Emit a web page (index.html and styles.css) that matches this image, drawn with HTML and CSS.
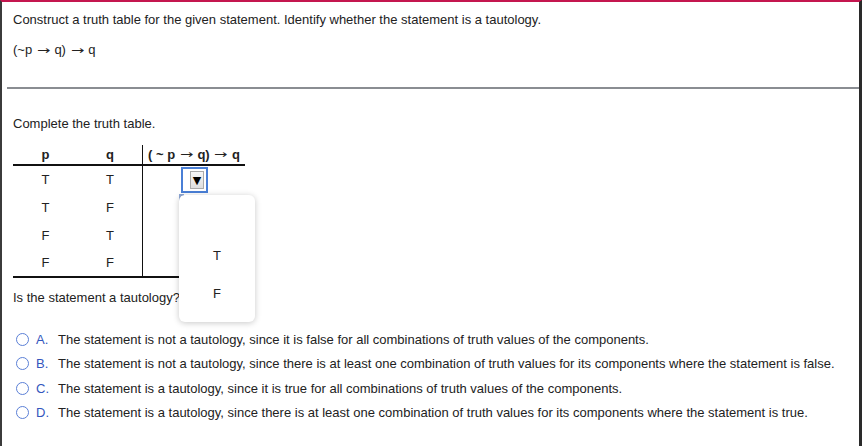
FILE: index.html
```html
<!DOCTYPE html>
<html>
<head>
<meta charset="utf-8">
<link rel="stylesheet" href="styles.css">
</head>
<body>
<div class="frame">
  <div class="question">
    <p class="line first">Construct a truth table for the given statement. Identify whether the statement is a tautology.</p>
    <p class="line stmt">(~p <span class="arr">→</span> q) <span class="arr">→</span> q</p>
  </div>
  <hr class="rule">
  <div class="answer">
    <p class="line">Complete the truth table.</p>
    <div class="table">
      <div class="cell head c1">p</div>
      <div class="cell head c2">q</div>
      <div class="cell head c3">( ~ p <span class="arr">→</span> q) <span class="arr">→</span> q</div>
      <div class="cell c1">T</div>
      <div class="cell c2">T</div>
      <div class="cell c3"><span class="select"><span class="btn">▼</span></span></div>
      <div class="cell c1">T</div>
      <div class="cell c2">F</div>
      <div class="cell c3"></div>
      <div class="cell c1">F</div>
      <div class="cell c2">T</div>
      <div class="cell c3"></div>
      <div class="cell c1 last">F</div>
      <div class="cell c2 last">F</div>
      <div class="cell c3 last"></div>
    </div>
    <p class="line ask">Is the statement a tautology?</p>
    <ul class="options">
      <li><span class="radio"></span><span class="letter">A.</span><span>The statement is not a tautology, since it is false for all combinations of truth values of the components.</span></li>
      <li><span class="radio"></span><span class="letter">B.</span><span>The statement is not a tautology, since there is at least one combination of truth values for its components where the statement is false.</span></li>
      <li><span class="radio"></span><span class="letter">C.</span><span>The statement is a tautology, since it is true for all combinations of truth values of the components.</span></li>
      <li><span class="radio"></span><span class="letter">D.</span><span>The statement is a tautology, since there is at least one combination of truth values for its components where the statement is true.</span></li>
    </ul>
  </div>
  <div class="corner"></div>
  <div class="popup">
    <div class="opt">T</div>
    <div class="opt">F</div>
  </div>
</div>
</body>
</html>
```

FILE: styles.css
```css
html, body {
  margin: 0;
  padding: 0;
  background: #fff;
}
body {
  font-family: "Liberation Sans", Arial, sans-serif;
  font-size: 13px;
  color: #222;
}
.frame {
  position: relative;
  height: 446px;
  box-sizing: border-box;
  border-left: 2px solid #3b3b3b;
  border-right: 3px solid #2a2a2a;
  border-top: 2px solid #c4164f;
  overflow: hidden;
}
.line {
  margin: 0;
  line-height: 15px;
}
.arr {
  display: inline-block;
  width: 15px;
  text-align: center;
  font-family: "DejaVu Sans", sans-serif;
  font-size: 11px;
  font-weight: normal;
  transform: scaleX(1.45);
}
.question {
  padding: 10px 0 0 11px;
}
.stmt {
  margin-top: 15px;
}
.rule {
  margin: 29px 0 0 5px;
  border: 0;
  border-top: 2px solid #8a8d92;
  height: 0;
}
.answer {
  padding: 27px 0 0 11px;
}
.table {
  display: grid;
  grid-template-columns: 65px 64px 103px;
  grid-auto-rows: 28px;
  grid-template-rows: 21px;
  margin-top: 14px;
}
.cell {
  display: flex;
  align-items: center;
  justify-content: center;
  padding-bottom: 2px;
  box-sizing: border-box;
  line-height: 15px;
}
.head {
  font-weight: bold;
  border-bottom: 2px solid #111;
  padding-bottom: 0;
}
.c3 {
  border-left: 1.5px solid #111;
}
.head.c3 {
  white-space: pre;
}
.last {
  border-bottom: 2px solid #111;
}
.select {
  display: inline-flex;
  justify-content: flex-end;
  align-items: center;
  width: 27px;
  height: 26px;
  box-sizing: border-box;
  border: 2px solid #4a7fd6;
  padding-right: 2px;
  margin-left: 1px;
  margin-top: 2px;
}
.btn {
  display: flex;
  align-items: center;
  justify-content: center;
  width: 14px;
  height: 18px;
  background: linear-gradient(#f6f6f6, #dedede);
  border: 1px solid #aaa;
  box-sizing: border-box;
  font-family: "DejaVu Sans", sans-serif;
  font-size: 11px;
  color: #000;
}
.ask {
  margin-top: 12px;
}
.options {
  list-style: none;
  margin: 22px 0 0 0;
  padding: 0;
}
.options li {
  display: flex;
  align-items: center;
  height: 24.5px;
  line-height: 15px;
}
.radio {
  width: 11px;
  height: 11px;
  border: 1.5px solid #5b7fd6;
  border-radius: 50%;
  margin-left: 3px;
  margin-right: 7px;
}
.letter {
  color: #3456bd;
  width: 22px;
}
.corner {
  position: absolute;
  left: 177px;
  top: 192px;
  width: 3px;
  height: 5px;
  border-top: 2px solid #8ea7d4;
  border-left: 2px solid #8ea7d4;
}
.popup {
  position: absolute;
  left: 177px;
  top: 193px;
  width: 76px;
  height: 127px;
  background: #fff;
  border-radius: 6px;
  box-shadow: 0 1px 6px rgba(0,0,0,0.22);
  display: flex;
  flex-direction: column;
  align-items: center;
  justify-content: flex-end;
  padding-bottom: 10px;
  box-sizing: border-box;
}
.opt {
  height: 38px;
  display: flex;
  align-items: center;
  justify-content: center;
  width: 100%;
}
```
